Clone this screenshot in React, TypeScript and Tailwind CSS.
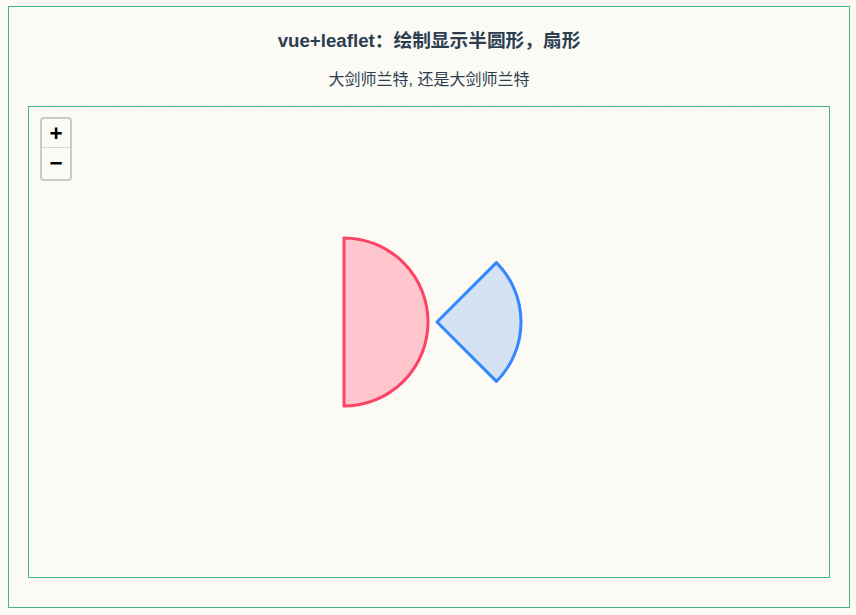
import React from "react";

const font = { fontFamily: '"Liberation Sans", "Noto Sans CJK SC", sans-serif' };

const ZoomControl = () => (
  <div className="absolute left-[11px] top-[10px] z-10 flex w-[32px] flex-col overflow-hidden rounded-[4px] border-2 border-[#c9c9c9] bg-[#fbfaf5]">
    <button
      className="flex h-[29px] items-center justify-center border-b border-[#d4d4d4] text-[21px] font-bold leading-none text-black"
      style={{ fontFamily: '"DejaVu Sans Mono", monospace' }}
    >
      +
    </button>
    <button
      className="flex h-[31px] items-center justify-center text-[21px] font-bold leading-none text-black"
      style={{ fontFamily: '"DejaVu Sans Mono", monospace' }}
    >
      −
    </button>
  </div>
);

const Shapes = () => (
  <svg className="absolute inset-0 h-full w-full" viewBox="0 0 800 470">
    {/* semicircle */}
    <path
      d="M315,131 A84,84 0 0 1 315,299 Z"
      fill="#ffc7cd"
      stroke="#fd4467"
      strokeWidth={3}
      strokeLinejoin="round"
    />
    {/* sector */}
    <path
      d="M408,215 L467.4,155.6 A84,84 0 0 1 467.4,274.4 Z"
      fill="#d5e2f4"
      stroke="#3388ff"
      strokeWidth={3}
      strokeLinejoin="round"
    />
  </svg>
);

export default function App() {
  return (
    <div className="min-h-[615px] bg-[#fbfaf5] pl-[8px] pt-[6px]" style={font}>
      <div className="flex h-[602px] w-[842px] flex-col border border-[#42b983] px-[19px] pt-[22px] pb-[29px]">
        <h2 className="text-center text-[18.7px] font-bold leading-[24px] text-[#2c3e50]">
          vue+leaflet：绘制显示半圆形，扇形
        </h2>
        <p className="mt-[17px] text-center text-[16px] leading-[20px] text-[#2c3e50]">
          大剑师兰特, 还是大剑师兰特
        </p>
        <div className="relative mt-[16px] flex-1 overflow-hidden border border-[#42b983] bg-[#fbfaf5] bg-[radial-gradient(#f4ecc4_0.8px,transparent_1px)] bg-[length:11px_9px]">
          <ZoomControl />
          <Shapes />
        </div>
      </div>
    </div>
  );
}
